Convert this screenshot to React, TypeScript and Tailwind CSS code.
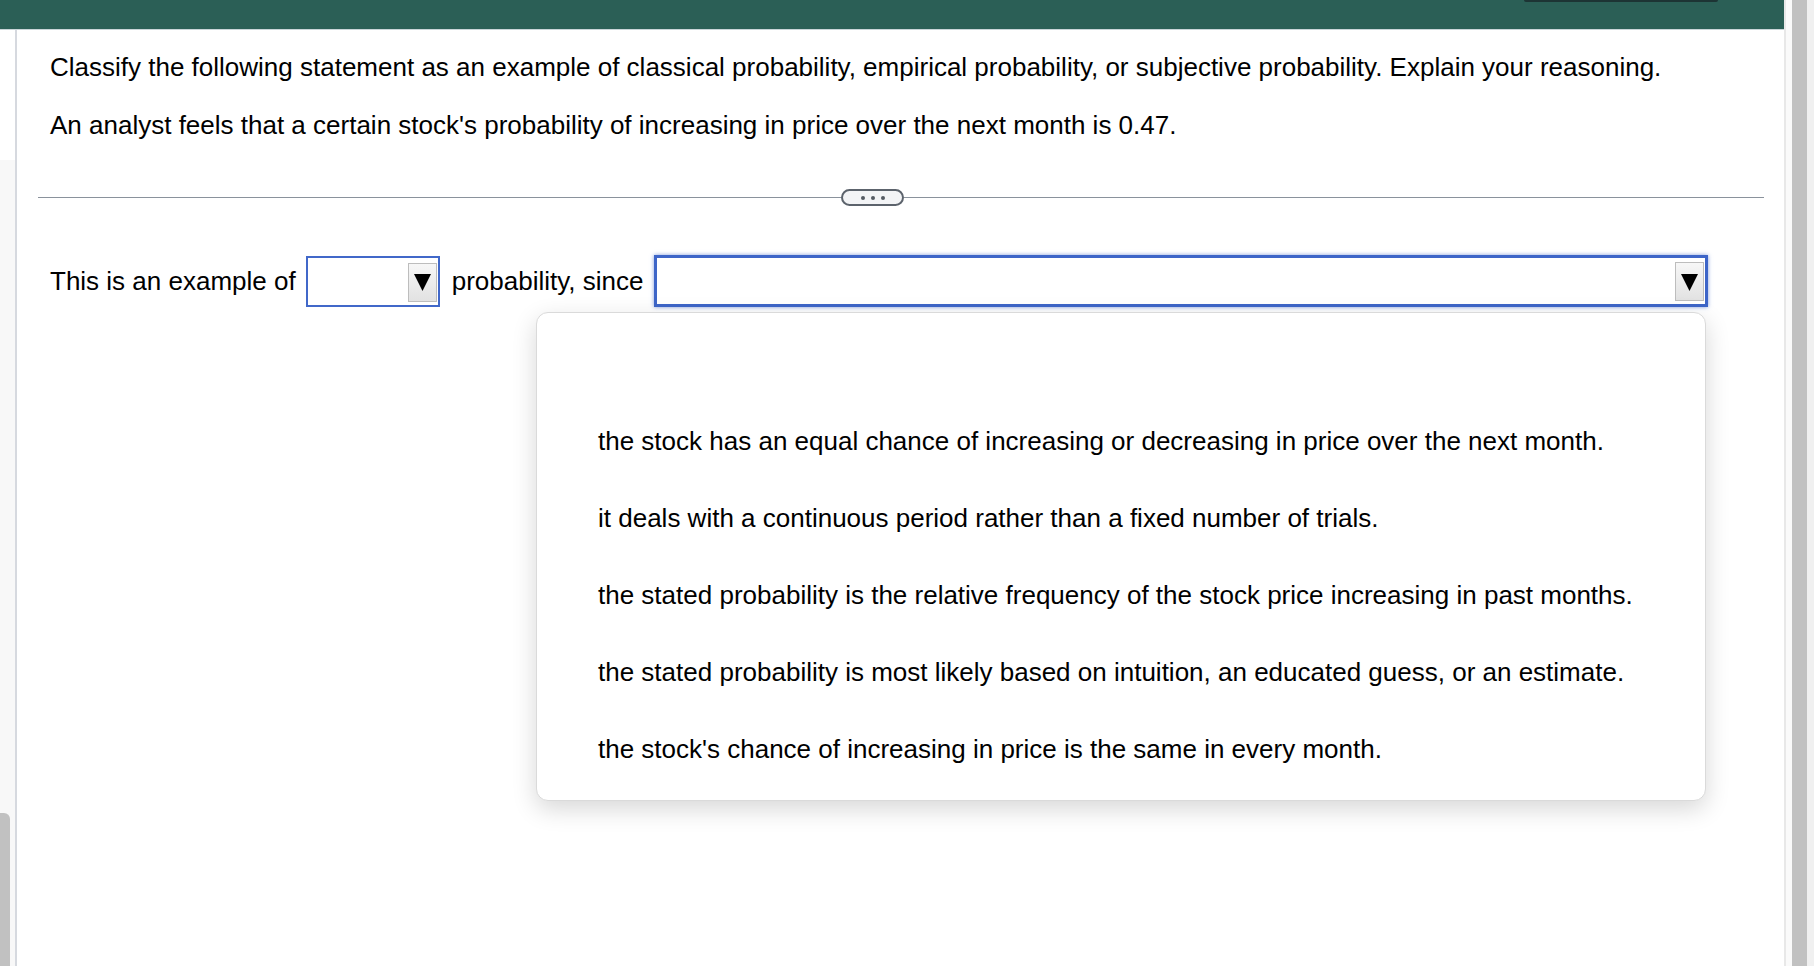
import React from 'react';

const options = [
  '',
  'the stock has an equal chance of increasing or decreasing in price over the next month.',
  'it deals with a continuous period rather than a fixed number of trials.',
  'the stated probability is the relative frequency of the stock price increasing in past months.',
  'the stated probability is most likely based on intuition, an educated guess, or an estimate.',
  "the stock's chance of increasing in price is the same in every month.",
];

const ArrowButton = () => (
  <div className="w-[29px] h-[39px] flex items-center justify-center border border-[#bdbdbd] bg-gradient-to-b from-[#f7f7f7] to-[#e2e2e2]">
    <svg width="17" height="18" viewBox="0 0 17 18">
      <polygon points="0,1 17,1 8.5,18" fill="#000" />
    </svg>
  </div>
);

const App = () => {
  return (
    <div className="w-[1814px] h-[966px] flex overflow-hidden bg-white text-black font-['Liberation_Sans',Arial,sans-serif]">
      {/* page column */}
      <div className="flex-1 flex flex-col">
        {/* top bar */}
        <div className="h-[30px] flex justify-end pr-[66px] bg-[#2b5f56] border-b border-[#c9d5d8]">
          <div className="w-[194px] h-[2px] bg-[#1d3434] rounded-b-[2px]" />
        </div>

        <div className="flex-1 flex">
          {/* left strip */}
          <div className="w-[15px] flex flex-col">
            <div className="h-[130px] bg-white" />
            <div className="flex-1 flex flex-col bg-[#f8f8f8]">
              <div className="mt-auto w-[10px] h-[153px] bg-[#c1c1c1] rounded-tr-[6px]" />
            </div>
          </div>
          <div className="w-[2px] bg-[#d6d9df]" />

          {/* content */}
          <div className="flex-1 relative">
            <div className="flex flex-col gap-[28px] pl-[33px] pt-[22px] text-[26px] leading-[30px]">
              <p>
                Classify the following statement as an example of classical probability, empirical probability, or
                subjective probability. Explain your reasoning.
              </p>
              <p>An analyst feels that a certain stock's probability of increasing in price over the next month is 0.47.</p>
            </div>

            {/* separator */}
            <div className="flex items-center ml-[21px] w-[1726px] h-[17px] mt-[49px]">
              <div className="w-[803px] h-px bg-[#8a929c]" />
              <div className="w-[63px] h-[17px] rounded-full border-2 border-[#5c636c] bg-[#f3f4f6] flex items-center justify-center gap-[6px]">
                <span className="w-[4px] h-[4px] rounded-full bg-[#555b63]" />
                <span className="w-[4px] h-[4px] rounded-full bg-[#555b63]" />
                <span className="w-[4px] h-[4px] rounded-full bg-[#555b63]" />
              </div>
              <div className="flex-1 h-px bg-[#8a929c]" />
            </div>

            {/* answer row */}
            <div className="flex items-center pl-[33px] mt-[49px] text-[26px] leading-[30px]">
              <span>This is an example of</span>
              <div className="ml-[10px] w-[134px] h-[51px] border-2 border-[#4168c9] flex justify-end items-start pt-[5px] pr-[1px]">
                <ArrowButton />
              </div>
              <span className="ml-[12px]">probability, since</span>
              <div className="ml-[11px] w-[1054px] h-[52px] border-[3px] border-[#3d65c8] shadow-[0_0_4px_rgba(61,101,200,0.65)] flex justify-end items-start pt-[4px] pr-[1px]">
                <ArrowButton />
              </div>
            </div>

            {/* open dropdown list */}
            <div className="absolute left-[519px] top-[282px] w-[1170px] h-[489px] bg-white border border-[#dadada] rounded-[12px] shadow-[0_8px_24px_rgba(0,0,0,0.16)] pt-[12px] text-[26px] leading-[30px]">
              {options.map((o, i) => (
                <div key={i} className="h-[77px] flex items-center pl-[61px]">
                  {o}
                </div>
              ))}
            </div>
          </div>
        </div>
      </div>

      {/* right scrollbar */}
      <div className="w-[30px] flex border-l-2 border-[#e8e8e8] bg-[#fafafa]">
        <div className="w-[6px]" />
        <div className="w-[15px] bg-[#c1c1c1]" />
        <div className="flex-1 bg-[#f0f0f0]" />
      </div>
    </div>
  );
};

export default App;
